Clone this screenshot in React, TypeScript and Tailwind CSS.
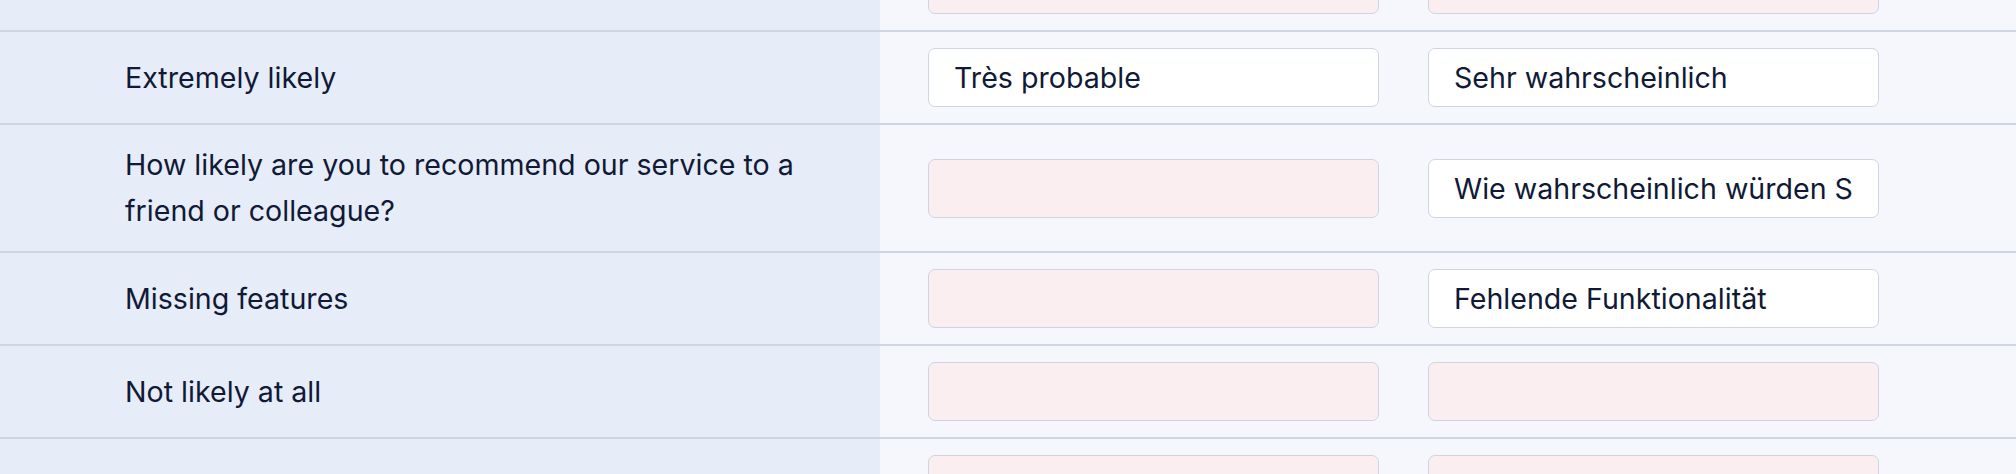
type Row = {
  label: string;
  fr: string;
  de: string;
};

// Translation rows; empty strings render as missing (pink) fields
const rows: Row[] = [
  { label: "", fr: "", de: "" },
  { label: "Extremely likely", fr: "Très probable", de: "Sehr wahrscheinlich" },
  {
    label: "How likely are you to recommend our service to a friend or colleague?",
    fr: "",
    de: "Wie wahrscheinlich würden Sie unseren Service einem Freund oder Kollegen empfehlen?",
  },
  { label: "Missing features", fr: "", de: "Fehlende Funktionalität" },
  { label: "Not likely at all", fr: "", de: "" },
  { label: "", fr: "", de: "" },
];

function Field({ value }: { value: string }) {
  const missing = value === "";
  return (
    <input
      readOnly
      value={value}
      className={
        "w-[451px] h-[59px] shrink-0 rounded-[7px] border-[1.5px] border-[#cdd5e1] px-[25px] text-[28.6px] text-[#101936] outline-none " +
        (missing ? "bg-[#fbeef1]" : "bg-white")
      }
    />
  );
}

export default function App() {
  return (
    <div
      className="h-[474px] w-full overflow-hidden bg-[#f5f7fc] text-[#101936]"
      style={{ fontFamily: "Inter, 'Noto Sans', sans-serif" }}
    >
      <div className="-mt-[61px]">
        {rows.map((row, i) => (
          <div
            key={i}
            className="grid grid-cols-[880px_1fr] border-b-2 border-[#cfd6e2]"
          >
            <div className="flex items-center bg-[#e6ecf8] pl-[125px] pr-[60px] py-[17px]">
              <p className="max-w-[700px] text-[28.6px] leading-[46px]">{row.label}</p>
            </div>
            <div className="flex items-center gap-[49px] pl-[48px] py-[16px]">
              <Field value={row.fr} />
              <Field value={row.de} />
            </div>
          </div>
        ))}
      </div>
    </div>
  );
}
